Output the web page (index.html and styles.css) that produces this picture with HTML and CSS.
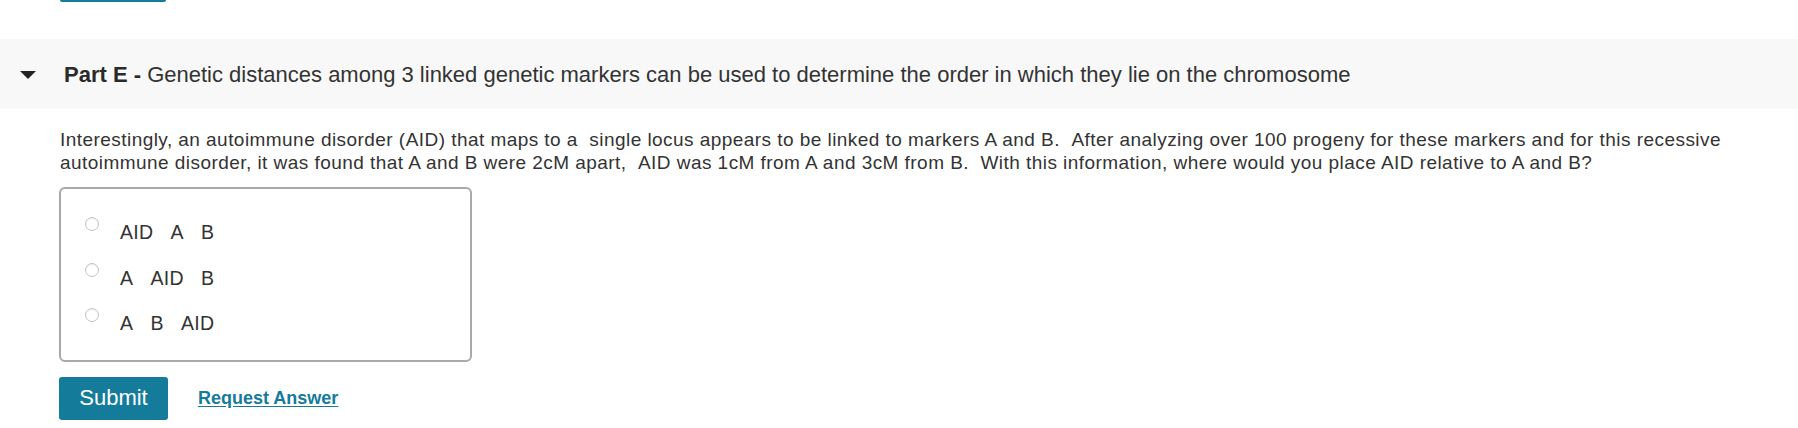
FILE: index.html
```html
<!DOCTYPE html>
<html lang="en">
<head>
<meta charset="utf-8">
<title>Part E</title>
<link rel="stylesheet" href="styles.css">
</head>
<body>
<div class="prev">
  <div class="prev-btn"></div>
</div>
<section class="part">
  <div class="part-head">
    <span class="caret"></span>
    <h2 class="part-title"><strong>Part E -</strong> Genetic distances among 3 linked genetic markers can be used to determine the order in which they lie on the chromosome</h2>
  </div>
  <div class="part-body">
    <p class="prompt">Interestingly, an autoimmune disorder (AID) that maps to a &nbsp;single locus appears to be linked to markers A and B. &nbsp;After analyzing over 100 progeny for these markers and for this recessive autoimmune disorder, it was found that A and B were 2cM apart, &nbsp;AID was 1cM from A and 3cM from B. &nbsp;With this information, where would you place AID relative to A and B?</p>
    <div class="choices">
      <label class="choice"><span class="radio"></span><span class="choice-text">AID&nbsp;&nbsp;&nbsp;A&nbsp;&nbsp;&nbsp;B</span></label>
      <label class="choice"><span class="radio"></span><span class="choice-text">A&nbsp;&nbsp;&nbsp;AID&nbsp;&nbsp;&nbsp;B</span></label>
      <label class="choice"><span class="radio"></span><span class="choice-text">A&nbsp;&nbsp;&nbsp;B&nbsp;&nbsp;&nbsp;AID</span></label>
    </div>
    <div class="actions">
      <button class="submit" type="button">Submit</button>
      <a class="request" href="#">Request Answer</a>
    </div>
  </div>
</section>
</body>
</html>
```

FILE: styles.css
```css
html, body {
  margin: 0;
  padding: 0;
  background: #ffffff;
}

body {
  font-family: "Liberation Sans", Arial, Helvetica, sans-serif;
  color: #333333;
}

.prev {
  height: 39px;
}

.prev-btn {
  margin-left: 60px;
  width: 106px;
  height: 2px;
  background: #157b9b;
  border-radius: 0 0 3px 3px;
}

.part-head {
  height: 70px;
  background: #f8f8f8;
  display: flex;
  align-items: center;
  padding-left: 20px;
}

.caret {
  width: 0;
  height: 0;
  border-left: 8px solid transparent;
  border-right: 8px solid transparent;
  border-top: 8px solid #222222;
  margin-top: 2px;
}

.part-title {
  margin: 0 0 0 28px;
  padding-top: 2px;
  font-size: 22px;
  font-weight: normal;
  color: #333333;
}

.part-title strong {
  font-weight: bold;
  color: #2a2a2a;
}

.part-body {
  padding: 0 60px;
}

.prompt {
  margin: 19px 0 0 0;
  font-size: 19px;
  letter-spacing: 0.45px;
  line-height: 23.3px;
}

.choices {
  margin: 12px 0 0 -1px;
  width: 409px;
  height: 171px;
  border: 2px solid #a9a9a9;
  border-radius: 6px;
  box-sizing: content-box;
  padding: 0;
  display: flex;
  flex-direction: column;
  gap: 21.5px;
}

.choices > .choice:first-child {
  margin-top: 31.5px;
}

.choice {
  display: flex;
  align-items: flex-start;
  line-height: 24px;
  font-size: 19.5px;
  letter-spacing: 0.3px;
  padding-left: 24px;
}

.radio {
  width: 12px;
  height: 12px;
  border: 1px solid #c4c4c4;
  border-radius: 50%;
  background: #ffffff;
  margin-top: -3px;
  box-shadow: inset 0 1px 1px rgba(0, 0, 0, 0.08);
}

.choice-text {
  margin-left: 21px;
  color: #333333;
}

.actions {
  margin: 15px 0 0 -1px;
  display: flex;
  align-items: center;
  gap: 30px;
}

.submit {
  width: 109px;
  height: 43px;
  border: none;
  border-radius: 3px;
  background: #157b9b;
  color: #ffffff;
  font-family: "Liberation Sans", Arial, Helvetica, sans-serif;
  font-size: 22px;
  padding: 0;
}

.request {
  font-size: 18px;
  font-weight: bold;
  color: #157b9b;
  text-decoration: underline;
  text-underline-offset: 2px;
}
```
